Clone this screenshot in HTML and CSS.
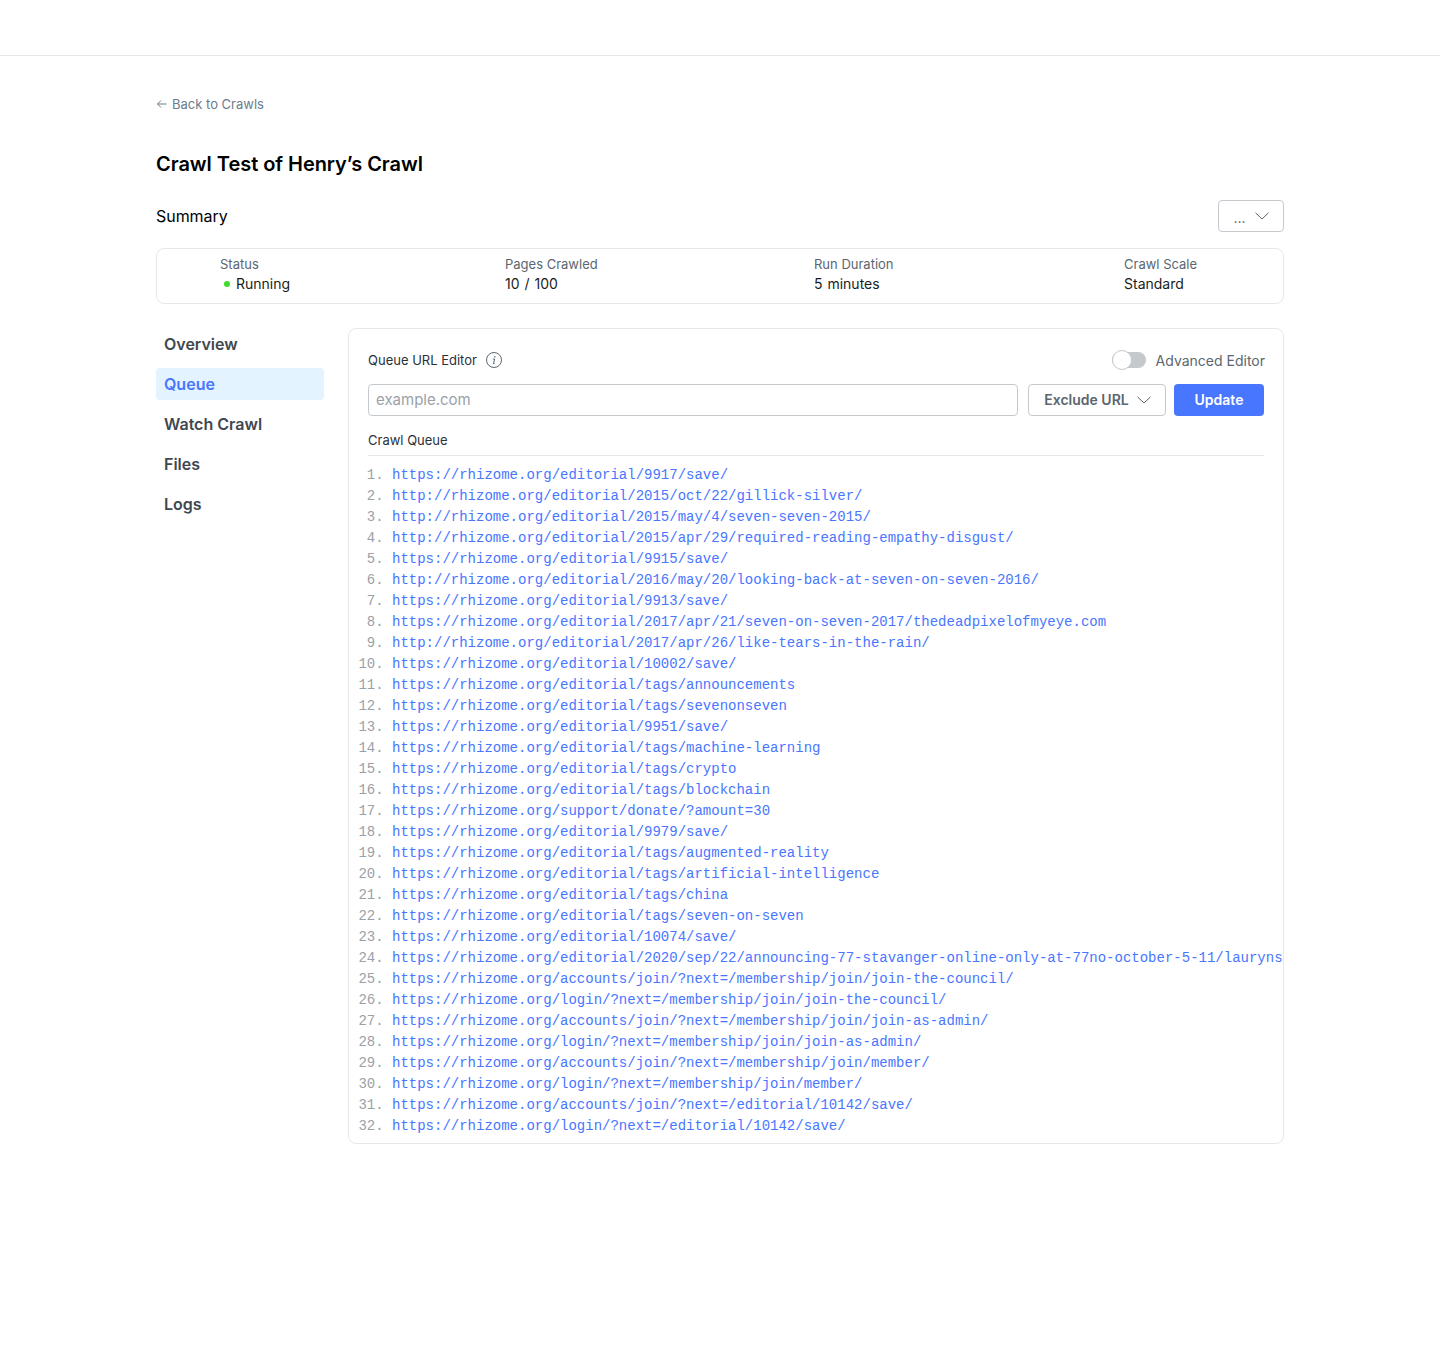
FILE: index.html
```html
<!DOCTYPE html>
<html lang="en">
<head>
<meta charset="utf-8">
<title>Crawl Test of Henry's Crawl</title>
<link rel="stylesheet" href="styles.css">
</head>
<body>
<header class="topbar"></header>
<main class="page">
  <a class="back" href="#"><svg class="back-icon" viewBox="0 0 12 12" width="12" height="12"><path d="M10.5 6H1.5M5 2.5 1.5 6 5 9.5" fill="none" stroke="currentColor" stroke-width="1"/></svg>Back to Crawls</a>
  <h1 class="title">Crawl Test of Henry’s Crawl</h1>
  <div class="summary-head">
    <h2 class="summary-title">Summary</h2>
    <button class="btn btn-more"><span class="more-text">...</span><svg class="chev" viewBox="0 0 14 8" width="14" height="8"><path d="M.5.8 7 7 13.5.8" fill="none" stroke="currentColor" stroke-width="1"/></svg></button>
  </div>
  <dl class="summary">
    <div class="stat"><dt>Status</dt><dd class="status"><i class="dot"></i>Running</dd></div>
    <div class="stat"><dt>Pages Crawled</dt><dd>10 / 100</dd></div>
    <div class="stat"><dt>Run Duration</dt><dd>5 minutes</dd></div>
    <div class="stat"><dt>Crawl Scale</dt><dd>Standard</dd></div>
  </dl>
  <div class="layout">
    <nav class="side">
      <a class="side-item" href="#">Overview</a>
      <a class="side-item active" href="#">Queue</a>
      <a class="side-item" href="#">Watch Crawl</a>
      <a class="side-item" href="#">Files</a>
      <a class="side-item" href="#">Logs</a>
    </nav>
    <section class="panel">
      <div class="panel-head">
        <div class="label-row">
          <span class="label">Queue URL Editor</span>
          <svg class="info" viewBox="0 0 16 16" width="16" height="16"><circle cx="8" cy="8" r="7.5" fill="none" stroke="currentColor" stroke-width="1"/><path d="M8.6 7 7.6 11.6M6.9 7H8.6M6.9 11.6H8.5" fill="none" stroke="currentColor" stroke-width="1"/><circle cx="8.8" cy="4.8" r=".8" fill="currentColor"/></svg>
        </div>
        <label class="switch-row"><span class="switch"><i class="knob"></i></span><span class="switch-text">Advanced Editor</span></label>
      </div>
      <div class="form">
        <input class="input" type="text" placeholder="example.com">
        <button class="btn btn-exclude"><span class="btn-text exclude-text">Exclude URL</span><svg class="chev" viewBox="0 0 14 8" width="14" height="8"><path d="M.5.8 7 7 13.5.8" fill="none" stroke="currentColor" stroke-width="1"/></svg></button>
        <button class="btn btn-primary"><span class="btn-text">Update</span></button>
      </div>
      <div class="queue-head">Crawl Queue</div>
      <ol class="queue">
        <li><a href="#">https://rhizome.org/editorial/9917/save/</a></li>
        <li><a href="#">http://rhizome.org/editorial/2015/oct/22/gillick-silver/</a></li>
        <li><a href="#">http://rhizome.org/editorial/2015/may/4/seven-seven-2015/</a></li>
        <li><a href="#">http://rhizome.org/editorial/2015/apr/29/required-reading-empathy-disgust/</a></li>
        <li><a href="#">https://rhizome.org/editorial/9915/save/</a></li>
        <li><a href="#">http://rhizome.org/editorial/2016/may/20/looking-back-at-seven-on-seven-2016/</a></li>
        <li><a href="#">https://rhizome.org/editorial/9913/save/</a></li>
        <li><a href="#">https://rhizome.org/editorial/2017/apr/21/seven-on-seven-2017/thedeadpixelofmyeye.com</a></li>
        <li><a href="#">http://rhizome.org/editorial/2017/apr/26/like-tears-in-the-rain/</a></li>
        <li><a href="#">https://rhizome.org/editorial/10002/save/</a></li>
        <li><a href="#">https://rhizome.org/editorial/tags/announcements</a></li>
        <li><a href="#">https://rhizome.org/editorial/tags/sevenonseven</a></li>
        <li><a href="#">https://rhizome.org/editorial/9951/save/</a></li>
        <li><a href="#">https://rhizome.org/editorial/tags/machine-learning</a></li>
        <li><a href="#">https://rhizome.org/editorial/tags/crypto</a></li>
        <li><a href="#">https://rhizome.org/editorial/tags/blockchain</a></li>
        <li><a href="#">https://rhizome.org/support/donate/?amount=30</a></li>
        <li><a href="#">https://rhizome.org/editorial/9979/save/</a></li>
        <li><a href="#">https://rhizome.org/editorial/tags/augmented-reality</a></li>
        <li><a href="#">https://rhizome.org/editorial/tags/artificial-intelligence</a></li>
        <li><a href="#">https://rhizome.org/editorial/tags/china</a></li>
        <li><a href="#">https://rhizome.org/editorial/tags/seven-on-seven</a></li>
        <li><a href="#">https://rhizome.org/editorial/10074/save/</a></li>
        <li><a href="#">https://rhizome.org/editorial/2020/sep/22/announcing-77-stavanger-online-only-at-77no-october-5-11/lauryns</a></li>
        <li><a href="#">https://rhizome.org/accounts/join/?next=/membership/join/join-the-council/</a></li>
        <li><a href="#">https://rhizome.org/login/?next=/membership/join/join-the-council/</a></li>
        <li><a href="#">https://rhizome.org/accounts/join/?next=/membership/join/join-as-admin/</a></li>
        <li><a href="#">https://rhizome.org/login/?next=/membership/join/join-as-admin/</a></li>
        <li><a href="#">https://rhizome.org/accounts/join/?next=/membership/join/member/</a></li>
        <li><a href="#">https://rhizome.org/login/?next=/membership/join/member/</a></li>
        <li><a href="#">https://rhizome.org/accounts/join/?next=/editorial/10142/save/</a></li>
        <li><a href="#">https://rhizome.org/login/?next=/editorial/10142/save/</a></li>
      </ol>
    </section>
  </div>
</main>
</body>
</html>
```
FILE: styles.css
```css
* { box-sizing: border-box; }
html, body { margin: 0; padding: 0; }
body {
  min-height: 1361px;
  background: #fff;
  color: #000;
  font-family: Inter, "Liberation Sans", sans-serif;
  font-size: 14px;
}
a { text-decoration: none; color: inherit; }
button { font-family: inherit; }

.topbar { height: 56px; border-bottom: 1px solid #e5e7ea; }
.page { width: 1128px; margin: 0 auto; padding-top: 40px; }

.back { display: flex; align-items: center; height: 16px; color: #6b7c8c; font-size: 13px; line-height: 16px; }
.back-icon { margin-right: 4px; }

.title { margin: 38px 0 0; font-size: 20px; line-height: 28px; font-weight: 600; letter-spacing: -0.04px; color: #000; }

.summary-head { display: flex; justify-content: space-between; align-items: center; margin-top: 22px; }
.summary-title { margin: 0; font-size: 16px; line-height: 24px; font-weight: 400; letter-spacing: -0.05px; }

.btn { display: flex; align-items: center; justify-content: center; height: 32px; border-radius: 4px; font-size: 14px; cursor: pointer; }
.btn-text { position: relative; top: -1px; }
.exclude-text { left: 1px; }
.more-text { position: relative; top: 1px; }
.btn-more { width: 66px; gap: 9px; padding: 0; background: #fff; border: 1px solid #c4c9ce; color: #5b6670; }
.btn-exclude { width: 138px; margin-left: 10px; gap: 9px; padding: 0; background: #fff; border: 1px solid #c4c9ce; color: #5b6670; font-weight: 600; }
.btn-primary { width: 90px; margin-left: 8px; background: #4876ff; border: 0; color: #fff; font-weight: 600; }

.summary {
  display: grid;
  grid-template-columns: 285px 309px 310px auto;
  margin: 16px 0 0;
  padding: 5px 0 0 63px;
  height: 56px;
  border: 1px solid #e5e7ea;
  border-radius: 8px;
}
.stat dt { color: #5b6670; font-size: 13px; line-height: 20px; }
.stat dd { margin: 0; font-size: 14px; line-height: 20px; color: #1a1d20; word-spacing: 1px; }
.status { display: flex; align-items: center; padding-left: 4px; }
.dot { width: 6px; height: 6px; margin-right: 6px; border-radius: 50%; background: #3fdc2c; }

.layout { display: flex; align-items: flex-start; margin-top: 24px; }
.side { display: flex; flex-direction: column; gap: 8px; width: 168px; margin-right: 24px; flex: none; }
.side-item { display: block; height: 32px; padding: 0 8px; border-radius: 4px; color: #3f474f; font-size: 16px; font-weight: 600; line-height: 32px; }
.side-item.active { background: #e3f3ff; color: #4876ff; }

.panel { flex: 1; min-width: 0; padding: 21px 19px 6px; border: 1px solid #e5e7ea; border-radius: 8px; }
.panel-head { display: flex; justify-content: space-between; align-items: center; height: 20px; }
.label-row { display: flex; align-items: center; gap: 9px; }
.label { color: #2b3138; font-size: 13px; line-height: 20px; }
.info { color: #5b6670; }
.switch-row { display: flex; align-items: center; gap: 10px; margin-right: -1px; color: #5b6670; font-size: 14px; line-height: 20px; }
.switch-text { position: relative; top: 1px; }
.switch { position: relative; display: block; width: 34px; height: 16px; background: #c4c9ce; border-radius: 8px; }
.knob { position: absolute; left: 0; top: -2px; width: 20px; height: 20px; background: #fff; border: 1px solid #c4c9ce; border-radius: 50%; }

.form { display: flex; margin-top: 14px; }
.input { flex: 1; min-width: 0; height: 32px; padding: 0 7px 2px; border: 1px solid #c4c9ce; border-radius: 4px; font-family: inherit; font-size: 15px; color: #1a1d20; }
.input::placeholder { color: #9aa1a8; opacity: 1; }

.queue-head { margin-top: 14px; padding-bottom: 5px; border-bottom: 1px solid #e5e7ea; color: #2b3138; font-size: 13px; line-height: 20px; }
.queue { margin: 9px 0 0; padding: 0 0 0 24px; font-family: "Liberation Mono", monospace; font-size: 14px; line-height: 21px; white-space: nowrap; }
.queue li::marker { color: #9aa1a8; }
.queue a { color: #4876ff; }
```
